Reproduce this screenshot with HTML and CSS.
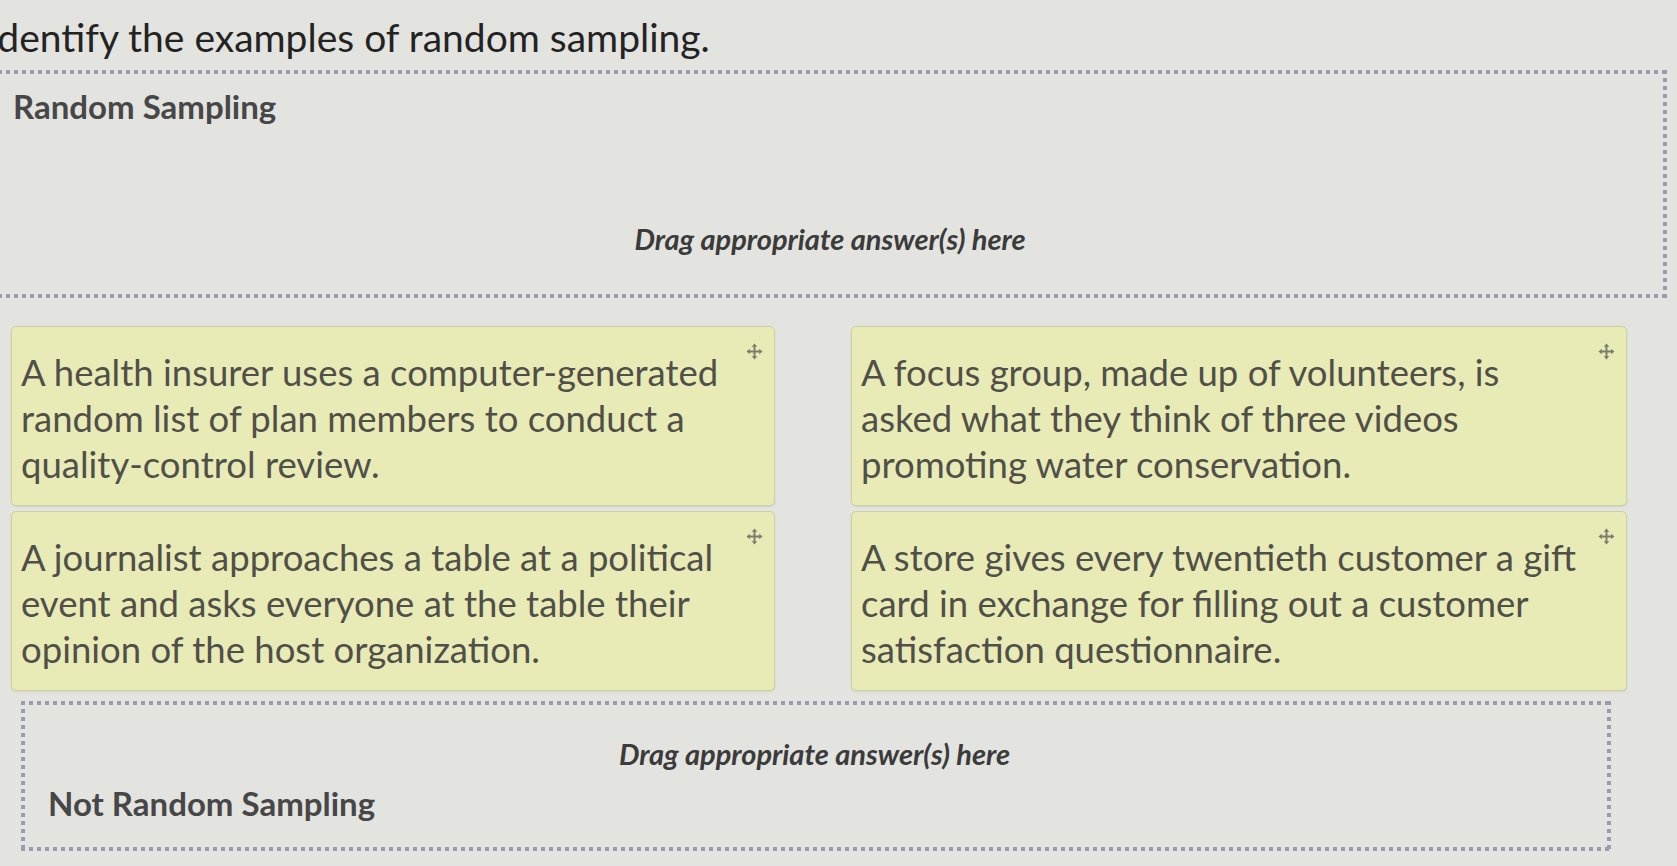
FILE: index.html
```html
<!DOCTYPE html>
<html lang="en">
<head>
  <meta charset="UTF-8">
  <meta name="viewport" content="width=device-width, initial-scale=1.0">
  <title>Random Sampling</title>
  <link rel="stylesheet" href="styles.css">
</head>
<body>
  <main class="quiz">
    <h1 class="prompt">Identify the examples of random sampling.</h1>

    <!-- Target bucket: correct answers -->
    <section class="drop-zone zone-top">
      <h2 class="zone-label">Random Sampling</h2>
      <p class="drop-hint">Drag appropriate answer(s) here</p>
    </section>

    <!-- Draggable answer tiles -->
    <div class="answer-grid">
      <div class="answer-card">
        <p>A health insurer uses a computer-generated random list of plan members to conduct a quality-control review.</p>
        <svg class="move-icon" viewBox="0 0 16 16"><path d="M8 0.5 L5.4 3.6 H7.1 V7.1 H3.6 V5.4 L0.5 8 L3.6 10.6 V8.9 H7.1 V12.4 H5.4 L8 15.5 L10.6 12.4 H8.9 V8.9 H12.4 V10.6 L15.5 8 L12.4 5.4 V7.1 H8.9 V3.6 H10.6 Z"/></svg>
      </div>
      <div class="answer-card">
        <p>A focus group, made up of volunteers, is asked what they think of three videos promoting water conservation.</p>
        <svg class="move-icon" viewBox="0 0 16 16"><path d="M8 0.5 L5.4 3.6 H7.1 V7.1 H3.6 V5.4 L0.5 8 L3.6 10.6 V8.9 H7.1 V12.4 H5.4 L8 15.5 L10.6 12.4 H8.9 V8.9 H12.4 V10.6 L15.5 8 L12.4 5.4 V7.1 H8.9 V3.6 H10.6 Z"/></svg>
      </div>
      <div class="answer-card">
        <p>A journalist approaches a table at a political event and asks everyone at the table their opinion of the host organization.</p>
        <svg class="move-icon" viewBox="0 0 16 16"><path d="M8 0.5 L5.4 3.6 H7.1 V7.1 H3.6 V5.4 L0.5 8 L3.6 10.6 V8.9 H7.1 V12.4 H5.4 L8 15.5 L10.6 12.4 H8.9 V8.9 H12.4 V10.6 L15.5 8 L12.4 5.4 V7.1 H8.9 V3.6 H10.6 Z"/></svg>
      </div>
      <div class="answer-card">
        <p>A store gives every twentieth customer a gift card in exchange for filling out a customer satisfaction questionnaire.</p>
        <svg class="move-icon" viewBox="0 0 16 16"><path d="M8 0.5 L5.4 3.6 H7.1 V7.1 H3.6 V5.4 L0.5 8 L3.6 10.6 V8.9 H7.1 V12.4 H5.4 L8 15.5 L10.6 12.4 H8.9 V8.9 H12.4 V10.6 L15.5 8 L12.4 5.4 V7.1 H8.9 V3.6 H10.6 Z"/></svg>
      </div>
    </div>

    <!-- Target bucket: incorrect answers -->
    <section class="drop-zone zone-bottom">
      <p class="drop-hint">Drag appropriate answer(s) here</p>
      <h2 class="zone-label">Not Random Sampling</h2>
    </section>
  </main>
</body>
</html>
```

FILE: styles.css
```css
:root {
  --bg: #e3e3e0;
  --text: #2a2a2a;
  --label: #474747;
  --card-bg: #e9ebb7;
  --card-border: #d0d09c;
  --card-text: #505049;
  --dots: #9b9bb2;
}

* {
  margin: 0;
  padding: 0;
  box-sizing: border-box;
  font-family: Lato, 'Open Sans', sans-serif;
}

html, body {
  height: 100%;
  overflow: hidden;
}

body {
  background-color: var(--bg);
  color: var(--text);
}

.quiz {
  padding-top: 14px;
}

.prompt {
  font-size: 39px;
  font-weight: 400;
  line-height: 46px;
  margin-left: -13px;
  color: #232323;
}

/* Drop zones: square dotted outline built from gradients */
.drop-zone {
  --dot: linear-gradient(to right, var(--dots) 50%, transparent 0);
  --dot-v: linear-gradient(to bottom, var(--dots) 50%, transparent 0);
  background:
    var(--dot) top left / 8px 4px repeat-x,
    var(--dot) bottom left / 8px 4px repeat-x,
    var(--dot-v) top left / 4px 8px repeat-y,
    var(--dot-v) top right / 4px 8px repeat-y;
  display: flex;
  flex-direction: column;
}

.zone-top {
  margin: 10px 10px 0 -10px;
  height: 228px;
  padding: 16px 0 0 23px;
}

.zone-bottom {
  margin: 10px 66px 0 21px;
  height: 150px;
  padding: 36px 0 0 27px;
}

.zone-label {
  font-size: 33px;
  font-weight: 700;
  color: var(--label);
  line-height: 40px;
}

.drop-hint {
  font-size: 29px;
  font-weight: 700;
  font-style: italic;
  color: #3b3b3b;
  text-align: center;
  line-height: 34px;
}

.zone-top .drop-hint {
  margin-top: 96px;
  padding-right: 20px;
}

.zone-bottom .drop-hint {
  padding-right: 30px;
}

.zone-bottom .zone-label {
  margin-top: 12px;
}

/* Answer tiles */
.answer-grid {
  display: grid;
  grid-template-columns: 764px 776px;
  column-gap: 76px;
  row-gap: 5px;
  padding: 28px 0 0 11px;
}

.answer-card {
  position: relative;
  background-color: var(--card-bg);
  border: 1px solid var(--card-border);
  border-radius: 5px;
  padding: 22px 48px 18px 9px;
  min-height: 178px;
  box-shadow: 0 1px 2px rgba(0, 0, 0, 0.08);
}

.answer-card p {
  font-size: 36.5px;
  line-height: 46px;
  color: var(--card-text);
}

.move-icon {
  position: absolute;
  top: 16px;
  right: 11px;
  width: 17px;
  height: 17px;
  fill: #7c7c6c;
}
```
